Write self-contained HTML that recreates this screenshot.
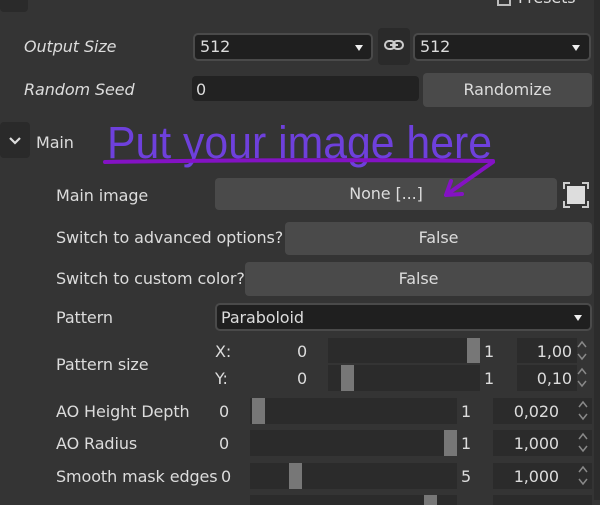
<!DOCTYPE html>
<html><head><meta charset="utf-8">
<style>
*{margin:0;padding:0;box-sizing:border-box}
body{width:600px;height:500px;overflow:hidden;background:#343434;font-family:"DejaVu Sans","Liberation Sans",sans-serif;font-size:16px;color:#dcdcdc;position:relative;letter-spacing:-0.1px}
.a{position:absolute}
.t{position:absolute;white-space:nowrap;line-height:20px}
.dk{background:#222;border-radius:4px}
.cb{background:#1f1f1f;border:2px solid #4a4a4a;border-radius:5px}
.btn{background:#4a4a4a;border-radius:4px;text-align:center;color:#ddd}
.sl{background:#2b2b2b}
.h{position:absolute;background:#777;width:13px}
.sp{position:absolute}
.tri{position:absolute;width:0;height:0;border-left:4px solid transparent;border-right:4px solid transparent;border-top:6px solid #eee}
</style></head><body>
<div class="a" style="left:0;top:-10px;width:28px;height:22px;background:#2a2a2a;border-radius:4px"></div>
<div class="a" style="left:497px;top:-6px;width:14px;height:12px;border:2px solid #bbb"></div>
<div class="t" style="left:518px;top:-12px">Presets</div>
<div class="a" style="left:594px;top:0;width:6px;height:500px;background:#2c2c2c"></div>

<div class="t" style="left:24px;top:37px;font-style:italic">Output Size</div>
<div class="a cb" style="left:193px;top:33px;width:180px;height:28px"></div>
<div class="t" style="left:200px;top:37px">512</div>
<div class="tri" style="left:355px;top:45px"></div>
<div class="a" style="left:378px;top:28px;width:32px;height:37px;background:#2a2a2a;border-radius:4px"></div>
<svg class="a" style="left:383px;top:38px" width="22" height="14" viewBox="0 0 22 14"><rect x="2" y="3" width="10" height="8" rx="4" fill="none" stroke="#ccc" stroke-width="2"/><rect x="10" y="3" width="10" height="8" rx="4" fill="none" stroke="#ccc" stroke-width="2"/><line x1="7" y1="7" x2="15" y2="7" stroke="#ccc" stroke-width="2"/></svg>
<div class="a cb" style="left:413px;top:33px;width:178px;height:28px"></div>
<div class="t" style="left:420px;top:37px">512</div>
<div class="tri" style="left:572px;top:45px"></div>

<div class="t" style="left:24px;top:80px;font-style:italic">Random Seed</div>
<div class="a dk" style="left:192px;top:76px;width:227px;height:25px"></div>
<div class="t" style="left:196px;top:80px">0</div>
<div class="a btn" style="left:423px;top:73px;width:169px;height:34px"></div>
<div class="t" style="left:423px;top:80px;width:169px;text-align:center">Randomize</div>

<div class="a" style="left:0;top:122px;width:30px;height:36px;background:#2a2a2a;border-radius:4px"></div>
<svg class="a" style="left:8px;top:136px" width="14" height="9"><polyline points="2,2 7,7 12,2" fill="none" stroke="#ddd" stroke-width="2.2"/></svg>
<div class="t" style="left:36px;top:133px">Main</div>

<div class="t" style="left:56px;top:186px">Main image</div>
<div class="a btn" style="left:215px;top:178px;width:342px;height:32px"></div>
<div class="t" style="left:215px;top:184px;width:342px;text-align:center">None [...]</div>
<svg class="a" style="left:563px;top:182px" width="26" height="26"><path d="M1 7V1H7M19 1H25V7M25 19V25H19M7 25H1V19" fill="none" stroke="#ccc" stroke-width="2"/><rect x="4" y="4" width="18" height="18" fill="#ddd"/></svg>

<svg class="a" style="left:0;top:0" width="600" height="220">
<text x="107" y="158" font-family="Liberation Sans" font-size="45" fill="#6e40dc" textLength="385" lengthAdjust="spacingAndGlyphs" letter-spacing="0">Put your image here</text>
<path d="M105 162 Q300 159 493 161" fill="none" stroke="#8412c4" stroke-width="4" stroke-linecap="round"/>
<path d="M493 162 L446 195 M446 195 L451 181 M446 195 L462 194" fill="none" stroke="#8412c4" stroke-width="4" stroke-linecap="round"/>
</svg>

<div class="t" style="left:56px;top:228px">Switch to advanced options?</div>
<div class="a btn" style="left:285px;top:222px;width:307px;height:33px"></div>
<div class="t" style="left:285px;top:228px;width:307px;text-align:center">False</div>

<div class="t" style="left:56px;top:269px">Switch to custom color?</div>
<div class="a btn" style="left:245px;top:262px;width:347px;height:34px"></div>
<div class="t" style="left:245px;top:269px;width:347px;text-align:center">False</div>

<div class="t" style="left:56px;top:308px">Pattern</div>
<div class="a cb" style="left:215px;top:303px;width:377px;height:28px"></div>
<div class="t" style="left:221px;top:308px">Paraboloid</div>
<div class="tri" style="left:574px;top:315px"></div>

<div class="t" style="left:56px;top:355px">Pattern size</div>
<div class="t" style="left:215px;top:342px">X:</div>
<div class="t" style="left:297px;top:342px">0</div>
<div class="a sl" style="left:328px;top:338px;width:152px;height:25px"></div>
<div class="h" style="left:467px;top:338px;height:25px"></div>
<div class="t" style="left:484px;top:342px">1</div>
<div class="a sl" style="left:517px;top:338px;width:60px;height:25px"></div>
<div class="t" style="left:517px;top:342px;width:55px;text-align:right">1,00</div>
<svg class="sp" style="left:576px;top:339px" width="12" height="24"><path d="M2 8L6 3L10 8M2 15L6 20L10 15" fill="none" stroke="#888" stroke-width="1.5"/></svg>
<div class="t" style="left:215px;top:369px">Y:</div>
<div class="t" style="left:297px;top:369px">0</div>
<div class="a sl" style="left:328px;top:365px;width:152px;height:26px"></div>
<div class="h" style="left:341px;top:365px;height:26px"></div>
<div class="t" style="left:484px;top:369px">1</div>
<div class="a sl" style="left:517px;top:365px;width:60px;height:26px"></div>
<div class="t" style="left:517px;top:369px;width:55px;text-align:right">0,10</div>
<svg class="sp" style="left:576px;top:366px" width="12" height="24"><path d="M2 8L6 3L10 8M2 15L6 20L10 15" fill="none" stroke="#888" stroke-width="1.5"/></svg>

<div class="t" style="left:56px;top:402px">AO Height Depth</div>
<div class="t" style="left:219px;top:402px">0</div>
<div class="a sl" style="left:250px;top:398px;width:207px;height:26px"></div>
<div class="h" style="left:252px;top:398px;height:26px"></div>
<div class="t" style="left:461px;top:402px">1</div>
<div class="a sl" style="left:493px;top:398px;width:99px;height:26px"></div>
<div class="t" style="left:493px;top:402px;width:66px;text-align:right">0,020</div>
<svg class="sp" style="left:577px;top:399px" width="12" height="24"><path d="M2 8L6 3L10 8M2 15L6 20L10 15" fill="none" stroke="#888" stroke-width="1.5"/></svg>

<div class="t" style="left:56px;top:434px">AO Radius</div>
<div class="t" style="left:219px;top:434px">0</div>
<div class="a sl" style="left:250px;top:430px;width:207px;height:26px"></div>
<div class="h" style="left:444px;top:430px;height:26px"></div>
<div class="t" style="left:461px;top:434px">1</div>
<div class="a sl" style="left:493px;top:430px;width:99px;height:26px"></div>
<div class="t" style="left:493px;top:434px;width:66px;text-align:right">1,000</div>
<svg class="sp" style="left:577px;top:431px" width="12" height="24"><path d="M2 8L6 3L10 8M2 15L6 20L10 15" fill="none" stroke="#888" stroke-width="1.5"/></svg>

<div class="t" style="left:56px;top:467px">Smooth mask edges</div>
<div class="t" style="left:221px;top:467px">0</div>
<div class="a sl" style="left:250px;top:463px;width:207px;height:26px"></div>
<div class="h" style="left:289px;top:463px;height:26px"></div>
<div class="t" style="left:461px;top:467px">5</div>
<div class="a sl" style="left:493px;top:463px;width:99px;height:26px"></div>
<div class="t" style="left:493px;top:467px;width:66px;text-align:right">1,000</div>
<svg class="sp" style="left:577px;top:464px" width="12" height="24"><path d="M2 8L6 3L10 8M2 15L6 20L10 15" fill="none" stroke="#888" stroke-width="1.5"/></svg>

<div class="a sl" style="left:250px;top:495px;width:207px;height:10px"></div>
<div class="h" style="left:424px;top:495px;height:10px"></div>
<div class="a sl" style="left:493px;top:495px;width:99px;height:10px"></div>
</body></html>
